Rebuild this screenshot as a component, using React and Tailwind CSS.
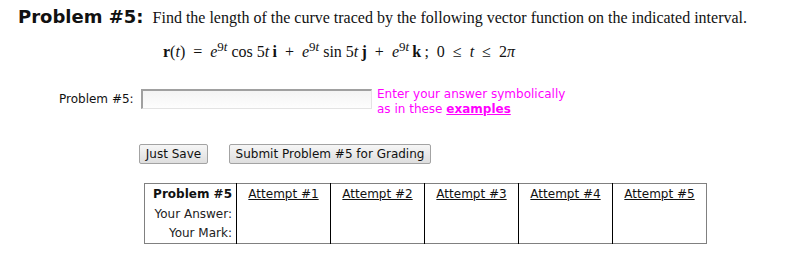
export default function App() {
  const sans = { fontFamily: '"DejaVu Sans", Verdana, sans-serif' }
  const serif = { fontFamily: '"Liberation Serif", "Times New Roman", serif' }
  const attempts = [1, 2, 3, 4, 5]
  const btn = 'h-[20px] text-[12px] text-[#111] border border-[#a3a3a3] rounded-[2px] bg-gradient-to-b from-[#f6f6f6] to-[#dedede]'
  return (
    <div className="w-[799px] h-[262px] bg-white text-[#111] overflow-hidden" style={sans}>
      {/* Problem statement */}
      <div className="pl-[18px] pt-[6px] flex items-baseline">
        <span className="text-[18px] font-bold leading-[22px]">Problem #5:</span>
        <span className="ml-[9px] text-[16px] leading-[22px]" style={serif}>
          Find the length of the curve traced by the following vector function on the indicated interval.
        </span>
      </div>

      <div className="pl-[163px] mt-[12px] h-[22px] text-[16px] leading-[22px] whitespace-nowrap" style={serif}>
        <b>r</b>(<i>t</i>)&nbsp; = &nbsp;<i>e</i><sup className="text-[13px]">9<i>t</i></sup> cos 5<i>t</i>&thinsp;<b>i</b>&nbsp; + &nbsp;<i>e</i><sup className="text-[13px]">9<i>t</i></sup> sin 5<i>t</i>&thinsp;<b>j</b>&nbsp; + &nbsp;<i>e</i><sup className="text-[13px]">9<i>t</i></sup>&thinsp;<b>k</b>&thinsp;;&nbsp; 0 &nbsp;≤&nbsp; <i>t</i> &nbsp;≤&nbsp; 2<i>π</i>
      </div>

      {/* Answer row */}
      <div className="mt-[21px] flex items-start">
        <span className="ml-[59px] mt-[5px] h-[20px] flex items-center text-[12px] w-[82px]">Problem #5:</span>
        <div className="mt-[5px] w-[231px] h-[20px] border-t-2 border-l-2 border-t-[#a0a0a0] border-l-[#a0a0a0] border-b border-r border-b-[#e3e3e3] border-r-[#e3e3e3] bg-gradient-to-b from-[#f4f4f4] to-[#fdfdfd]" />
        <div className="ml-[5px] mt-[3px] text-[12px] leading-[15px] text-[#ff00ff]">
          <div>Enter your answer symbolically</div>
          <div>as in these <span className="font-bold underline">examples</span></div>
        </div>
      </div>

      {/* Buttons */}
      <div className="mt-[27px] ml-[139px] flex gap-[21px]">
        <button className={`${btn} w-[69px]`} style={sans}>Just Save</button>
        <button className={`${btn} w-[202px]`} style={sans}>Submit Problem #5 for Grading</button>
      </div>

      {/* Attempts table */}
      <table className="mt-[19px] ml-[144px] border border-[#808080] border-collapse text-[12px]">
        <tbody>
          <tr className="h-[20px]">
            <td className="w-[92px] pr-[4px] text-right font-bold">Problem #5</td>
            {attempts.map(n => (
              <td key={n} className="w-[94px] border-l border-black text-center align-middle">
                <span className="underline">Attempt #{n}</span>
              </td>
            ))}
          </tr>
          <tr className="h-[20px]">
            <td className="pr-[4px] text-right text-[#222]">Your Answer:</td>
            {attempts.map(n => <td key={n} className="border-l border-black" />)}
          </tr>
          <tr className="h-[20px]">
            <td className="pr-[4px] text-right text-[#222]">Your Mark:</td>
            {attempts.map(n => <td key={n} className="border-l border-black" />)}
          </tr>
        </tbody>
      </table>
    </div>
  )
}
